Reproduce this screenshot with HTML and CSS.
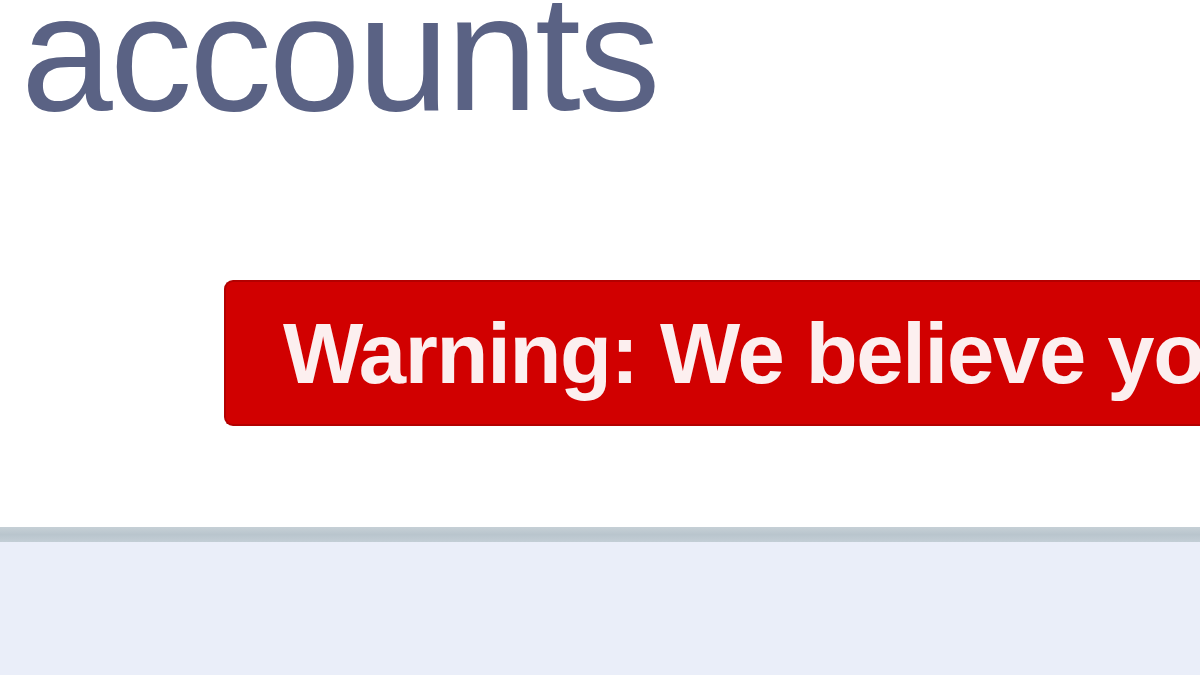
FILE: index.html
```html
<!DOCTYPE html>
<html lang="en">
<head>
<meta charset="utf-8">
<title>accounts</title>
<link rel="stylesheet" href="styles.css">
</head>
<body>
<div class="page">
  <section class="top">
    <h1 class="title">accounts</h1>
    <div class="warn-row">
      <div class="warning">Warning: We believe your account may be at risk</div>
    </div>
  </section>
  <div class="divider"></div>
  <section class="bottom"></section>
</div>
</body>
</html>
```

FILE: styles.css
```css
html, body {
  margin: 0;
  padding: 0;
  background: #ffffff;
}
.page {
  width: 1200px;
  height: 675px;
  overflow: hidden;
  display: flex;
  flex-direction: column;
  font-family: "Liberation Sans", Arial, sans-serif;
}
.top {
  height: 527px;
  flex: none;
  background: #ffffff;
  overflow: hidden;
}
.title {
  margin: -29px 0 0 21px;
  font-size: 165px;
  line-height: 1;
  font-weight: normal;
  letter-spacing: -3px;
  color: #5a6284;
}
.warn-row {
  margin-top: 144px;
  padding-left: 224px;
  overflow: hidden;
  white-space: nowrap;
}
.warning {
  display: inline-block;
  box-sizing: border-box;
  height: 146px;
  padding: 2px 200px 0 57px;
  line-height: 140px;
  background: #d10000;
  border: 2px solid #b30000;
  border-right: none;
  border-radius: 9px 0 0 9px;
  color: #fcefef;
  font-weight: bold;
  font-size: 85px;
  letter-spacing: -1.3px;
}
.divider {
  height: 15px;
  flex: none;
  background: linear-gradient(#c6d0d6, #b9c5cd 50%, #c3ced6);
}
.bottom {
  flex: 1;
  background: #eaeef9;
}
```
